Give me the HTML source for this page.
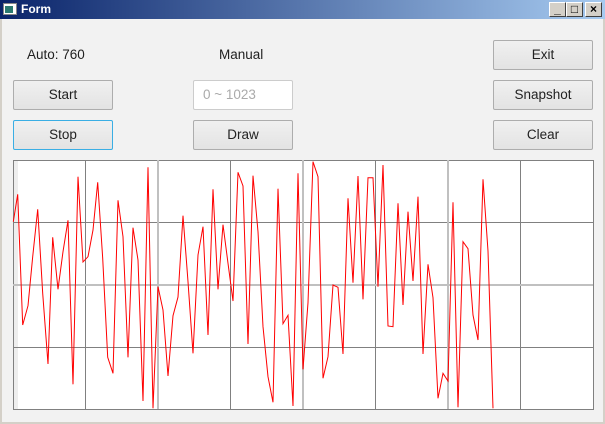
<!DOCTYPE html>
<html><head><style>
*{margin:0;padding:0;box-sizing:border-box}
body{width:605px;height:424px;overflow:hidden;background:#d4d0c8;font-family:"Liberation Sans",sans-serif;position:relative}
.title{position:absolute;left:0;top:0;width:605px;height:19px;background:linear-gradient(to right,#0a246a,#a6caf0)}
.title span{position:absolute;left:21px;top:2px;color:#fff;font-weight:bold;font-size:12px}
.ico{position:absolute;left:3px;top:3px;width:14px;height:12px;background:#fff;border:1px solid #888}
.ico i{position:absolute;left:1px;top:2px;width:8px;height:7px;background:#2a7a70}
.tb{position:absolute;top:2px;width:17px;height:15px;background:#d4d0c8;border:1px solid;border-color:#fff #404040 #404040 #fff;font-size:12px;text-align:center;line-height:13px;font-weight:bold;color:#000}
.client{position:absolute;left:2px;top:19px;width:601px;height:403px;background:#f2f2f2}
.btn{position:absolute;width:100px;height:30px;border:1px solid #adadad;border-radius:2px;background:linear-gradient(#f0f0f0,#e3e3e3);font-size:13.5px;color:#222;text-align:center;line-height:28px}
.lbl{position:absolute;font-size:13.5px;color:#222}
svg{position:absolute;left:0;top:0}
</style></head><body>
<div class="title"><div class="ico"><i></i></div><span>Form</span>
<div class="tb" style="left:549px">_</div><div class="tb" style="left:566px">□</div><div class="tb" style="left:585px">×</div></div>
<div class="client"></div>
<div class="lbl" style="left:27px;top:47px">Auto: 760</div>
<div class="lbl" style="left:219px;top:47px">Manual</div>
<div class="btn" style="left:493px;top:40px">Exit</div>
<div class="btn" style="left:13px;top:80px">Start</div>
<div class="btn" style="left:193px;top:80px;background:#fff;border-color:#ccc;color:#aaa;text-align:left;padding-left:9px">0 ~ 1023</div>
<div class="btn" style="left:493px;top:80px">Snapshot</div>
<div class="btn" style="left:13px;top:120px;border-color:#3aaee4">Stop</div>
<div class="btn" style="left:193px;top:120px">Draw</div>
<div class="btn" style="left:493px;top:120px">Clear</div>
<svg width="605" height="424">
<rect x="13.5" y="160.5" width="580" height="249" fill="#fff" stroke="#808080"/>
<rect x="14" y="161" width="4" height="248" fill="#eee"/>
<g stroke="#808080" stroke-width="1">
<line x1="85.5" y1="160" x2="85.5" y2="409"/><line x1="230.5" y1="160" x2="230.5" y2="409"/><line x1="375.5" y1="160" x2="375.5" y2="409"/><line x1="520.5" y1="160" x2="520.5" y2="409"/>
<line x1="13" y1="222.5" x2="593" y2="222.5"/><line x1="13" y1="347.5" x2="593" y2="347.5"/></g>
<g stroke="#c0c0c0" stroke-width="2">
<line x1="158" y1="160" x2="158" y2="409"/><line x1="303" y1="160" x2="303" y2="409"/><line x1="448" y1="160" x2="448" y2="409"/>
<line x1="13" y1="285" x2="593" y2="285"/></g>
<polyline fill="none" stroke="#f00" stroke-width="1" points="13.3,221.7 17.7,194.3 22.7,325 28,305.7 32.7,256.7 37.7,209.3 42.7,293.3 48,364 52.7,237.3 58,289.3 63,251.7 68,220.3 73,384.3 78,176.7 83,262 88,256.7 93,230 97.7,182.3 102.7,258.3 107.7,357.3 113,373.3 118,200.3 123,236.7 128,357.3 133,227.7 138,260 143,401 148,167.3 153,408.3 158,286.7 163,310 168,376 173,315.7 178,297 183,215.7 188,281.7 193,353.3 198,255 203,226.7 208,335 213,189.3 218,289.3 223,224.7 228,263.3 233,301 238,172.3 243,186 248,344 253,175.7 258,231.7 263,326.7 268,376.7 273,402.3 278,188.7 283,323.7 288,315.3 293,406 298,173.3 303,369.3 308,302.7 313,161.7 318,176.7 323,378.3 328,356.7 333,285 338,287.3 343,354 348,198.3 353,282.7 358,176 363,299.3 368,177.7 373,177.7 378,286.7 383,165 388,326 393,326.7 398,203.3 403,305 408,211.7 413,281 418,196.7 423,354 428,264.3 433,297.7 438,398.3 443,373.3 448,381 453,202.3 458,407.3 463,241.7 468,248.7 473,315 478,340 483,179.3 488,251 493,408.3"/>
</svg>
</body></html>
